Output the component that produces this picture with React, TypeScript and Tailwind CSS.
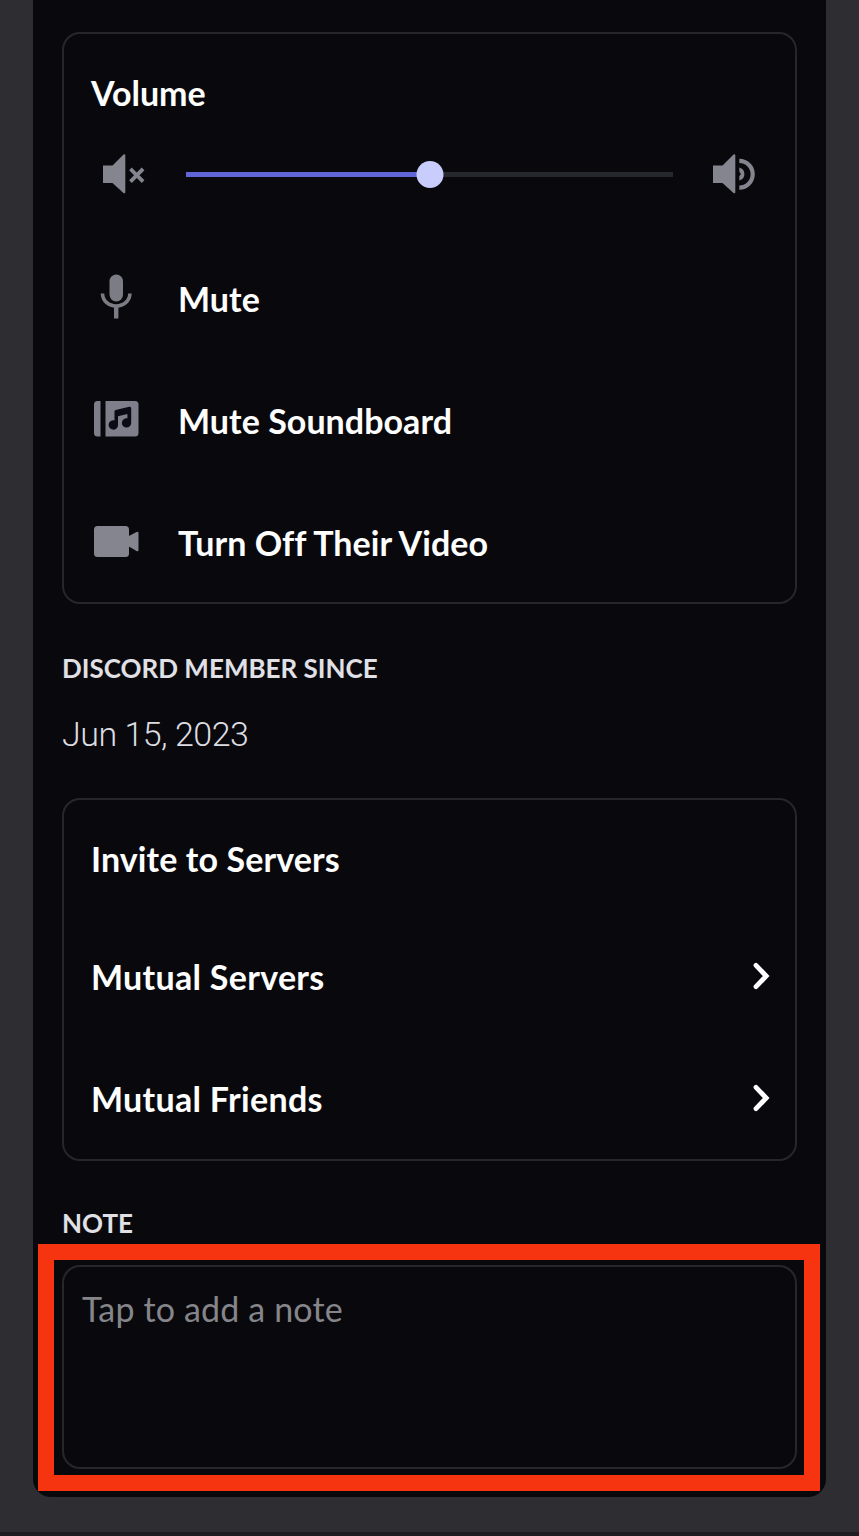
import React from 'react';

interface ActionRowProps {
  icon: React.ReactNode;
  label: string;
}

function SpeakerMutedIcon() {
  return (
    <svg className="w-11 h-11 shrink-0" viewBox="0 0 44 44" fill="none">
      <path d="M2 13.5h9.5L22.5 2.5q1.8-1 1.8 1V40q0 2-1.8 1L11.5 31H2z" fill="#85858f" />
      <path d="M30.8 18.3l9.9 9.9M40.7 18.3l-9.9 9.9" stroke="#85858f" strokeWidth="3.8" strokeLinecap="square" />
    </svg>
  );
}

function SpeakerIcon() {
  return (
    <svg className="w-11 h-11 shrink-0" viewBox="0 0 44 44" fill="none">
      <path d="M2 13.5h9.5L22.5 2.5q1.8-1 1.8 1V40q0 2-1.8 1L11.5 31H2z" fill="#85858f" />
      <path d="M28.3 15.5a6.7 6.7 0 0 1 0 13z" fill="#85858f" />
      <path d="M28.3 8.8a13.4 13.4 0 0 1 0 26.8" stroke="#85858f" strokeWidth="4.2" />
      <path d="M28 19.5l2 2.500-2 2.500z" fill="#09090d" />
    </svg>
  );
}

function MicIcon() {
  return (
    <svg className="w-11 h-11 overflow-visible" viewBox="0 0 44 44" fill="none">
      <rect x="15.5" y="-1.5" width="13.5" height="27" rx="6.75" fill="#7c7d84" />
      <path d="M8.5 17.5c0 7 6 12.5 13.7 12.5s13.7-5.5 13.7-12.5" stroke="#7c7d84" strokeWidth="3.6" />
      <path d="M22.2 30v12.5" stroke="#7c7d84" strokeWidth="4.4" />
    </svg>
  );
}

function SoundboardIcon() {
  return (
    <svg className="w-11 h-11 overflow-visible" viewBox="0 0 44 44">
      <path d="M3.5 3h3v35.5h-3A3.5 3.5 0 0 1 0 35V6.5A3.5 3.5 0 0 1 3.5 3z" fill="#7e7f8b" />
      <path d="M11.5 3H41a3.5 3.5 0 0 1 3.5 3.5V35a3.5 3.5 0 0 1-3.5 3.5H11.5z" fill="#7e7f8b" />
      <path d="M20.5 13.5q0-1.2 1.2-1.6l13.5-3.2q2-.4 2 1.5V24.5a4.7 4.7 0 1 1-3.8-4.2V16L24 18.2V27a4.7 4.7 0 1 1-3.5-4.6z" fill="#0b0b16" />
    </svg>
  );
}

function VideoIcon() {
  return (
    <svg className="w-11 h-11 overflow-visible" viewBox="0 0 44 44" fill="#85858f">
      <rect x="0" y="6" width="35" height="31" rx="3.5" />
      <path d="M34 16.5l8.5-4.5q2-.8 2 1v16.900q0 2-2 1L34 26z" />
    </svg>
  );
}

function ChevronIcon() {
  return (
    <svg className="w-6 h-8 -mr-1 relative -top-px" viewBox="0 0 24 32" fill="none" stroke="#fff" strokeWidth="4.8" strokeLinecap="round">
      <path d="M8 5.300L18.200 16 8 26.700" strokeLinejoin="miter" />
    </svg>
  );
}

function ActionRow({ icon, label }: ActionRowProps) {
  return (
    <button className="flex items-center w-full h-11 text-left">
      <span className="w-11 h-11 mr-10 shrink-0">{icon}</span>
      <span className="whitespace-nowrap text-[34px] leading-11 font-bold relative top-px tracking-[0.05px]">{label}</span>
    </button>
  );
}

export default function App() {
  return (
    <div className="w-[859px] h-[1536px] overflow-hidden bg-[#2e2e32] border-b-4 border-[#1e1d22] pl-[33px] font-['Lato',sans-serif] text-white">
      <main className="relative w-[793px] h-[1497px] rounded-b-[18px] bg-[#09090d] px-[29px] pt-8">
        <section className="h-[572px] border-2 border-[#27272b] rounded-[18px] px-[30px] pt-[37px]">
          <h2 className="w-fit text-[34px] leading-11 font-bold -ml-[3px]">Volume</h2>
          <div className="flex items-center h-11 mt-[37px]">
            <span className="ml-[7px] flex"><SpeakerMutedIcon /></span>
            <div className="relative flex items-center w-[487px] ml-[41px] mr-[38px]">
              <div className="w-1/2 h-[5px] bg-[#6065d8]" />
              <div className="w-1/2 h-[5px] bg-[#27282d]" />
              <div className="absolute left-1/2 size-[27px] -translate-x-1/2 rounded-full bg-[#c9cdfb]" />
            </div>
            <SpeakerIcon />
          </div>
          <div className="flex flex-col gap-[78px] mt-20">
            <ActionRow icon={<MicIcon />} label="Mute" />
            <ActionRow icon={<SoundboardIcon />} label="Mute Soundboard" />
            <ActionRow icon={<VideoIcon />} label="Turn Off Their Video" />
          </div>
        </section>

        <h3 className="w-fit mt-[46px] text-[26px] leading-9 font-bold text-[#e0e0e6]">DISCORD MEMBER SINCE</h3>
        <p className="w-fit mt-[26px] text-[34px] leading-11 font-light font-['Roboto',sans-serif] tracking-[-0.5px] text-[#dcdce2]">Jun 15, 2023</p>

        <section className="h-[363px] mt-[42px] border-2 border-[#27272b] rounded-[18px] px-[27px] pt-[37px]">
          <button className="flex h-11 text-[34px] leading-11 font-bold tracking-[0.1px]">
            <span>Invite to Servers</span>
          </button>
          <button className="flex items-center justify-between w-full h-11 mt-[74px] text-[34px] leading-11 font-bold tracking-[0.3px]">
            <span>Mutual Servers</span>
            <ChevronIcon />
          </button>
          <button className="flex items-center justify-between w-full h-11 mt-[78px] text-[34px] leading-11 font-bold tracking-[0.3px]">
            <span>Mutual Friends</span>
            <ChevronIcon />
          </button>
        </section>

        <h3 className="w-fit mt-11 text-[26px] leading-9 font-bold text-[#e0e0e6]">NOTE</h3>
        <div className="h-[204px] mt-6 border-2 border-[#27272b] rounded-[18px] px-[18px] pt-5">
          <p className="w-fit text-[34px] leading-11 tracking-[0.15px] text-[#85858a]">Tap to add a note</p>
        </div>
        <div className="absolute left-[5px] top-[1244px] w-[782px] h-[247px] border-[16px] border-[#f6340f] pointer-events-none" />
      </main>
    </div>
  );
}
